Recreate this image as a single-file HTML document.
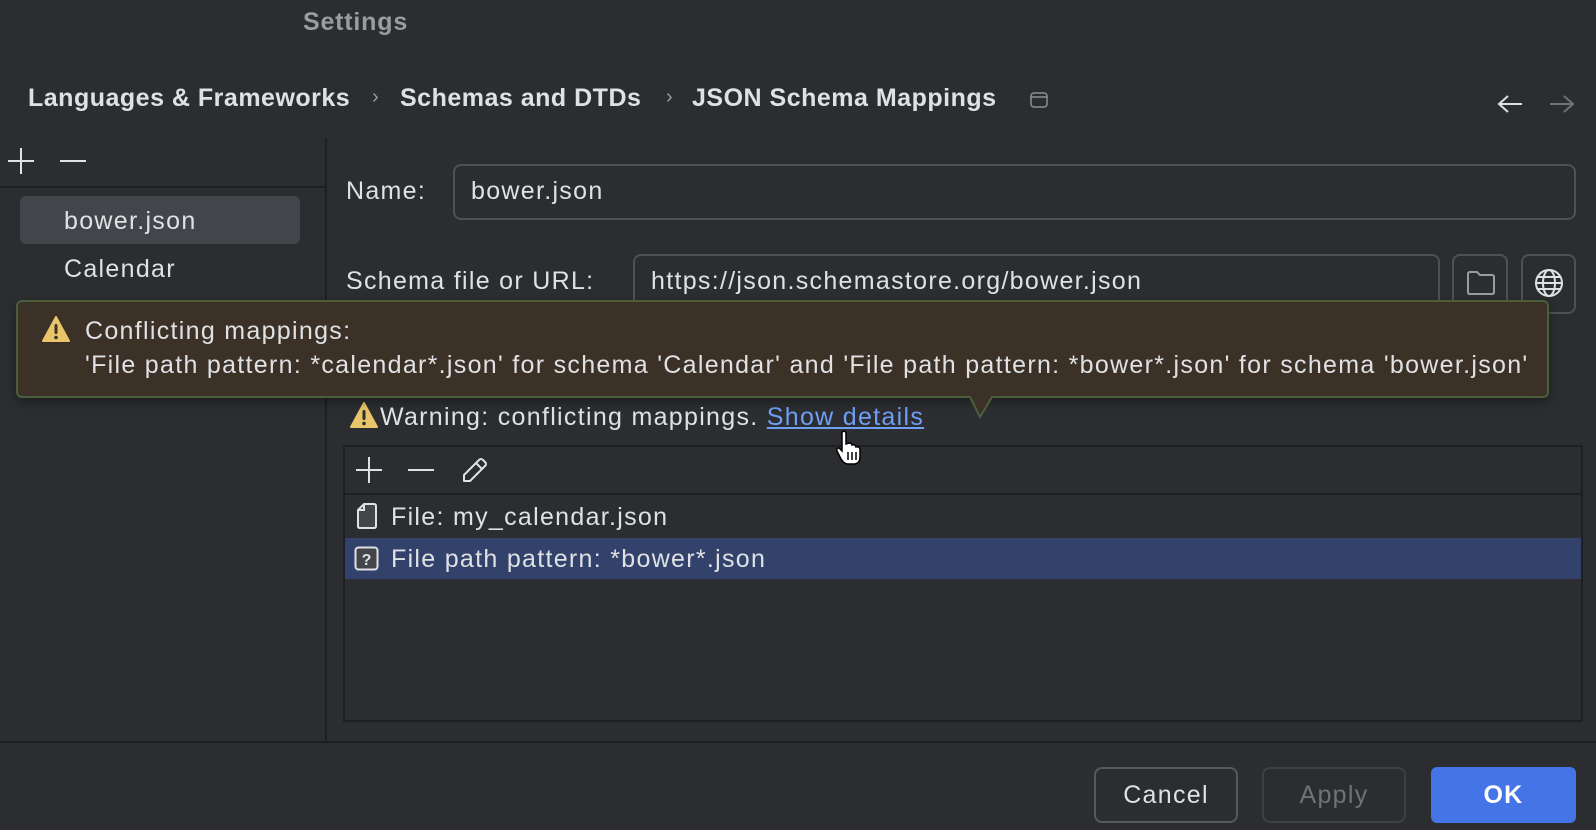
<!DOCTYPE html>
<html><head><meta charset="utf-8"><style>
*{box-sizing:border-box;margin:0;padding:0}
body{width:1596px;height:830px;overflow:hidden;background:#2b2d30;font-family:"Liberation Sans",sans-serif;color:#dfe1e5;position:relative}
.a{position:absolute;white-space:nowrap}
.t{font-size:25px;line-height:28px;letter-spacing:1.3px}
.box{position:absolute;border:2px solid #4e5157;border-radius:8px}
</style></head><body>
<div class="a" style="left:303px;top:8px;font-size:25px;font-weight:bold;color:#9a9ca1;letter-spacing:0.8px">Settings</div>
<div class="a" style="left:28px;top:84px;font-size:25px;font-weight:bold;color:#dfe1e5;letter-spacing:0.5px">Languages &amp; Frameworks</div>
<div class="a" style="left:372px;top:86px;font-size:20px;color:#9a9ca1">›</div>
<div class="a" style="left:400px;top:84px;font-size:25px;font-weight:bold;letter-spacing:0.5px">Schemas and DTDs</div>
<div class="a" style="left:666px;top:86px;font-size:20px;color:#9a9ca1">›</div>
<div class="a" style="left:692px;top:84px;font-size:25px;font-weight:bold;letter-spacing:0.5px">JSON Schema Mappings</div>
<svg class="a" style="left:1030px;top:92px" width="18" height="16"><rect x="1" y="1" width="16" height="14" rx="3" fill="none" stroke="#8c8f94" stroke-width="1.5"/><line x1="1" y1="5" x2="17" y2="5" stroke="#8c8f94" stroke-width="1.5"/></svg>
<svg class="a" style="left:1496px;top:94px" width="28" height="20"><path d="M3 10H26M12 2L3 10L12 18" fill="none" stroke="#dfe1e5" stroke-width="2"/></svg>
<svg class="a" style="left:1548px;top:94px" width="28" height="20"><path d="M2 10H25M16 2L25 10L16 18" fill="none" stroke="#6f7277" stroke-width="2"/></svg>

<div class="a" style="left:325px;top:138px;width:2px;height:604px;background:#1e1f22"></div>
<div class="a" style="left:0;top:186px;width:325px;height:2px;background:#1e1f22"></div>
<svg class="a" style="left:8px;top:148px" width="80" height="26"><path d="M13 0V26M0 13H26M52 13H78" stroke="#dfe1e5" stroke-width="2"/></svg>
<div class="a" style="left:20px;top:196px;width:280px;height:48px;background:#43454a;border-radius:6px"></div>
<div class="a t" style="left:64px;top:207px">bower.json</div>
<div class="a t" style="left:64px;top:255px">Calendar</div>

<div class="a t" style="left:346px;top:177px">Name:</div>
<div class="box" style="left:453px;top:164px;width:1123px;height:56px"></div>
<div class="a t" style="left:471px;top:177px">bower.json</div>
<div class="a t" style="left:346px;top:267px">Schema file or URL:</div>
<div class="box" style="left:633px;top:254px;width:807px;height:60px"></div>
<div class="a t" style="left:651px;top:267px">https://json.schemastore.org/bower.json</div>
<div class="box" style="left:1452px;top:254px;width:56px;height:60px"></div>
<svg class="a" style="left:1466px;top:270px" width="30" height="26"><path d="M2 4Q2 2 4 2H11L14 5H26Q28 5 28 7V22Q28 24 26 24H4Q2 24 2 22Z" fill="none" stroke="#9a9ca1" stroke-width="2"/></svg>
<div class="box" style="left:1521px;top:254px;width:55px;height:60px"></div>
<svg class="a" style="left:1534px;top:268px" width="30" height="30"><g fill="none" stroke="#dfe1e5" stroke-width="2"><circle cx="15" cy="15" r="13"/><ellipse cx="15" cy="15" rx="6" ry="13"/><path d="M2 15H28M4 9H26M4 21H26"/></g></svg>

<svg class="a" style="left:350px;top:402px" width="28" height="26"><path d="M14 1L27 25H1Z" fill="#e8c46a" stroke="#e8c46a" stroke-width="2" stroke-linejoin="round"/><rect x="12.5" y="8" width="3" height="10" rx="1.5" fill="#2b2d30"/><circle cx="14" cy="21.5" r="1.8" fill="#2b2d30"/></svg>
<div class="a t" style="left:380px;top:403px">Warning: conflicting mappings. <span style="color:#6f9ef5;text-decoration:underline">Show details</span></div>

<div class="a" style="left:16px;top:300px;width:1533px;height:98px;background:#3c3126;border:2px solid #4b5e3c;border-radius:6px;box-shadow:0 4px 10px rgba(0,0,0,.35)"></div>
<svg class="a" style="left:968px;top:394px" width="30" height="26"><path d="M2 3L12 23L24 3" fill="#3c3126" stroke="#4b5e3c" stroke-width="2"/><rect x="3" y="0" width="20" height="4" fill="#3c3126"/></svg>
<svg class="a" style="left:42px;top:316px" width="28" height="26"><path d="M14 1L27 25H1Z" fill="#e8c46a" stroke="#e8c46a" stroke-width="2" stroke-linejoin="round"/><rect x="12.5" y="8" width="3" height="10" rx="1.5" fill="#3c3126"/><circle cx="14" cy="21.5" r="1.8" fill="#3c3126"/></svg>
<div class="a t" style="left:85px;top:317px">Conflicting mappings:</div>
<div class="a t" style="left:85px;top:351px">'File path pattern: *calendar*.json' for schema 'Calendar' and 'File path pattern: *bower*.json' for schema 'bower.json'</div>

<div class="a" style="left:343px;top:445px;width:1240px;height:277px;border:2px solid #1e1f22"></div>
<div class="a" style="left:345px;top:493px;width:1236px;height:2px;background:#1e1f22"></div>
<svg class="a" style="left:356px;top:456px" width="140" height="28"><path d="M13 1V27M0 14H26M52 14H78" stroke="#dfe1e5" stroke-width="2"/><path d="M108 25L108 19L123 4Q125 2 127 4L129 6Q131 8 129 10L114 25Z M120 7L126 13" fill="none" stroke="#dfe1e5" stroke-width="2" stroke-linejoin="round"/></svg>
<svg class="a" style="left:356px;top:502px" width="22" height="28"><path d="M8 2H18Q20 2 20 4V24Q20 26 18 26H4Q2 26 2 24V8Z" fill="#43454a" stroke="#dfe1e5" stroke-width="2" stroke-linejoin="round"/><path d="M8 2V8H2" fill="none" stroke="#dfe1e5" stroke-width="2"/></svg>
<div class="a t" style="left:391px;top:503px">File: my_calendar.json</div>
<div class="a" style="left:345px;top:538px;width:1236px;height:41px;background:#33426a"></div>
<svg class="a" style="left:354px;top:546px" width="26" height="26"><rect x="1.5" y="1.5" width="22" height="22" rx="3" fill="#43454a" stroke="#dfe1e5" stroke-width="2"/><text x="12.5" y="19" text-anchor="middle" font-family="Liberation Sans" font-weight="bold" font-size="16" fill="#dfe1e5">?</text></svg>
<div class="a t" style="left:391px;top:545px">File path pattern: *bower*.json</div>

<svg class="a" style="left:836px;top:430px" width="28" height="36"><path d="M6 2Q9 0 10 3V14L13 13Q16 13 16 15Q19 14 20 17Q23 16 24 19V27Q24 33 19 34H12Q8 34 5 29L1 21Q0 18 3 18L6 21Z" fill="#fff" stroke="#000" stroke-width="1.5"/><path d="M12 22V30M16 22V30M20 22V30" stroke="#000" stroke-width="1.5"/></svg>

<div class="a" style="left:0;top:741px;width:1596px;height:2px;background:#1e1f22"></div>
<div class="box" style="left:1094px;top:767px;width:144px;height:56px;border-color:#55585d"></div>
<div class="a t" style="left:1094px;top:781px;width:144px;text-align:center">Cancel</div>
<div class="box" style="left:1262px;top:767px;width:144px;height:56px;border-color:#3e4045"></div>
<div class="a t" style="left:1262px;top:781px;width:144px;text-align:center;color:#6f7277">Apply</div>
<div class="a" style="left:1431px;top:767px;width:145px;height:56px;background:#4574e6;border-radius:6px"></div>
<div class="a t" style="left:1431px;top:781px;width:145px;text-align:center;color:#fff;font-weight:bold">OK</div>
</body></html>
